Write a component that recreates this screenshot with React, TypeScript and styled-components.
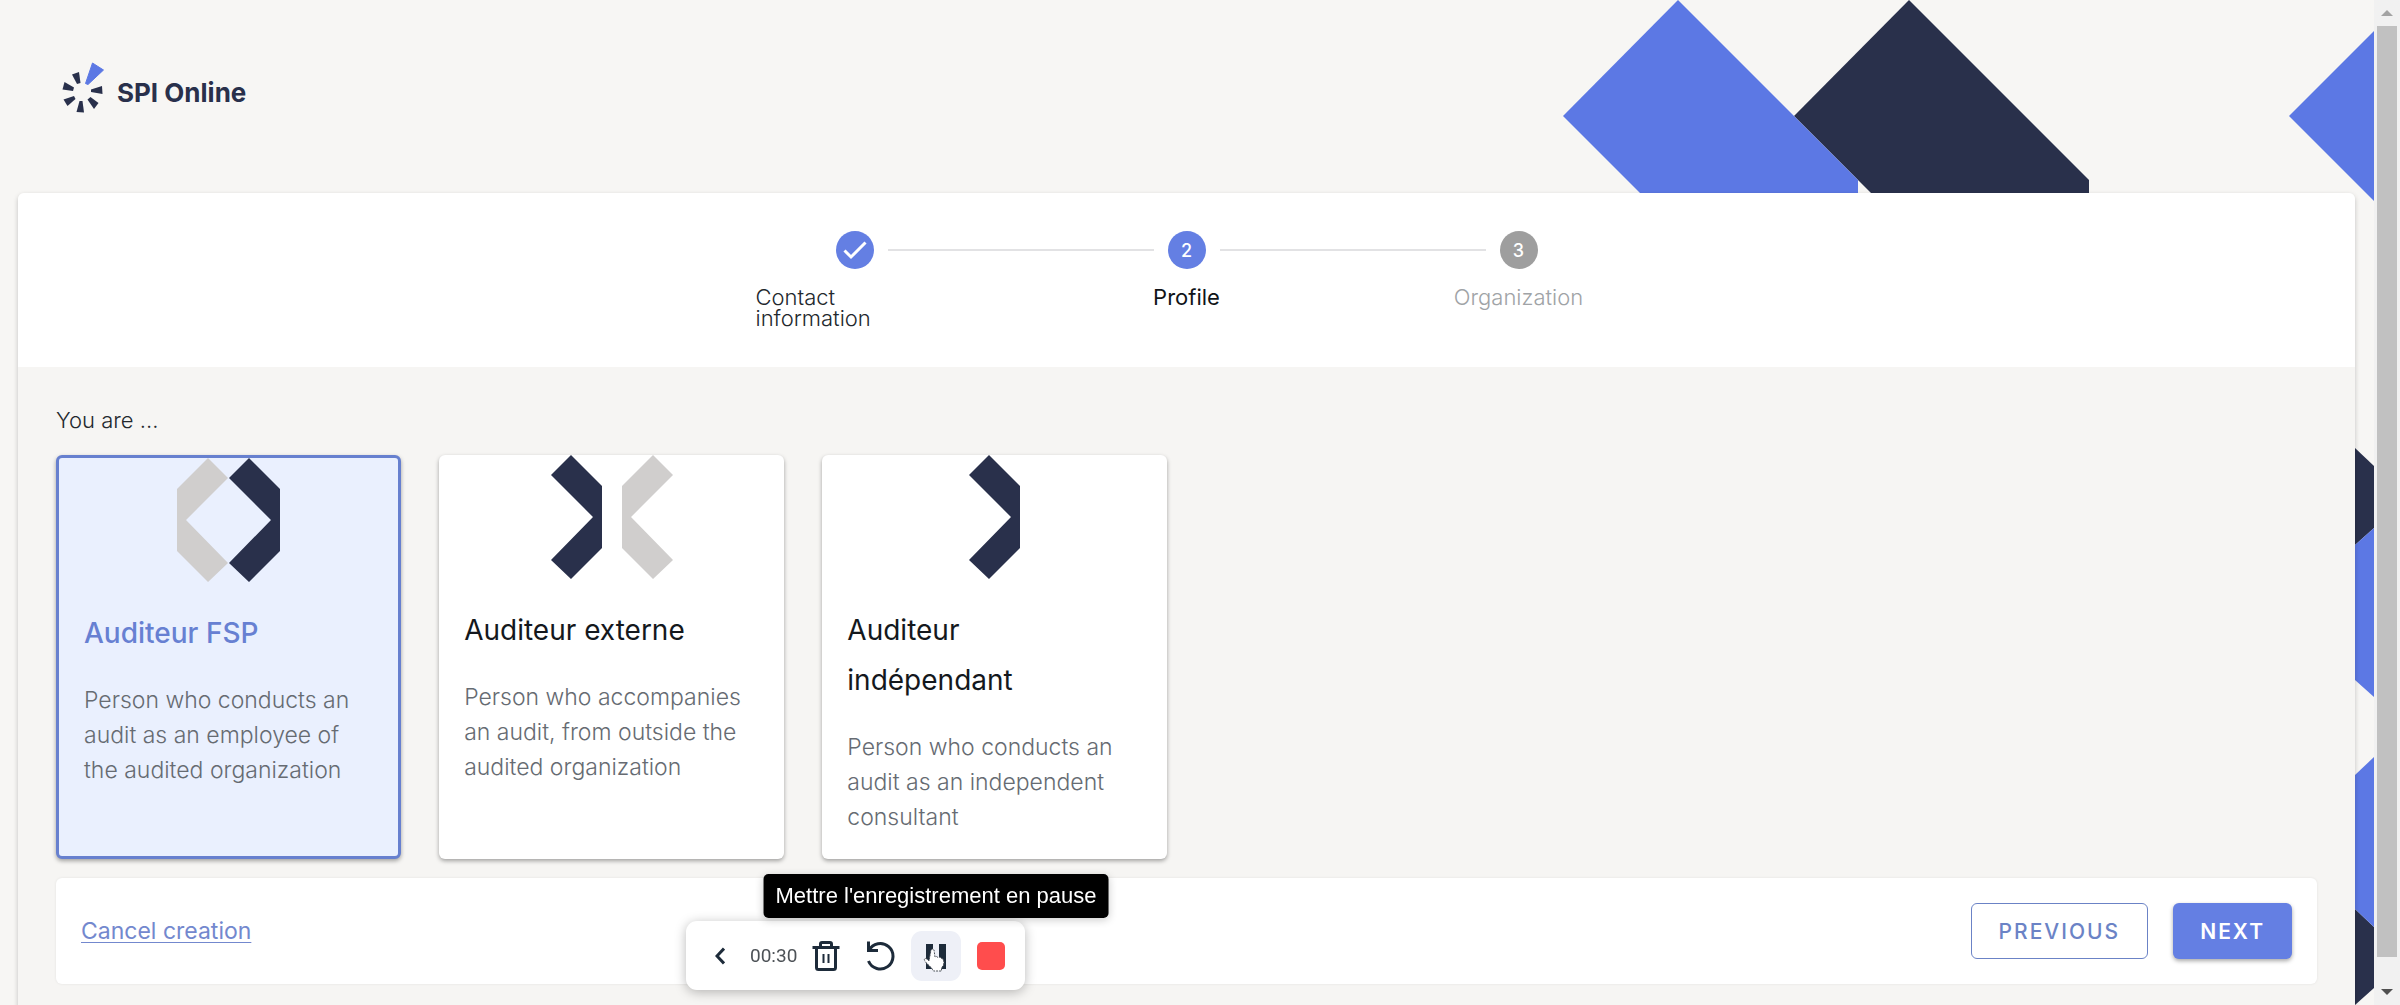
import React from "react";
import styled, { createGlobalStyle, css } from "styled-components";

const colors = {
  page: "#f7f6f4",
  blue: "#5c78e4",
  primary: "#647fe3",
  navy: "#29304b",
  grey: "#d0cecd",
  text: "#23282d",
  muted: "#666b72",
};

const GlobalStyle = createGlobalStyle`
  *, *::before, *::after { box-sizing: border-box; }
  body {
    margin: 0;
    background: ${colors.page};
    color: ${colors.text};
    font-family: Inter, "Noto Sans", sans-serif;
    font-size: 22px;
  }
  button { font: inherit; color: inherit; cursor: pointer; }
  h1, h2, p, ol { margin: 0; padding: 0; font-weight: 400; }
`;

const Window = styled.div`
  display: grid;
  grid-template-columns: minmax(0, 1fr) 26px;
  height: 100vh;
  overflow: hidden;
`;

const Page = styled.div`
  position: relative;
  display: flex;
  flex-direction: column;
  height: 100vh;
  padding: 0 19px 0 18px;
  overflow: hidden;
`;

const Backdrop = styled.svg`
  position: absolute;
  top: 0;
  right: 0;
  width: 811px;
  height: 1005px;
`;

const Header = styled.header`
  position: relative;
  display: flex;
  padding: 62px 44px 80px;
`;

const Brand = styled.a`
  display: flex;
  align-items: flex-end;
  gap: 13px;
  height: 51px;
  color: ${colors.navy};
  font-size: 26px;
  font-weight: 700;
  line-height: 40px;
  text-decoration: none;
`;

const Panel = styled.main`
  position: relative;
  flex: 1 0 auto;
  background: #f6f5f3;
  border-radius: 6px 6px 0 0;
  box-shadow: 0 2px 5px rgba(0, 0, 0, 0.22);
`;

const StepperBar = styled.nav`
  background: #fff;
  border-radius: 6px 6px 0 0;
  padding: 38px;
`;

const Steps = styled.ol`
  display: grid;
  grid-template-columns: repeat(3, 1fr);
  max-width: 996px;
  margin: 0 auto;
  list-style: none;
`;

const Step = styled.li`
  position: relative;
  display: flex;
  flex-direction: column;
  align-items: center;
  gap: 18px;

  & + &::before {
    content: "";
    position: absolute;
    top: 18px;
    left: calc(-50% + 33px);
    right: calc(50% + 33px);
    height: 2px;
    background: #e2e2e4;
  }
`;

const StepBadge = styled.span<{ $on: boolean }>`
  display: grid;
  place-items: center;
  width: 38px;
  height: 38px;
  border-radius: 50%;
  background: ${(p) => (p.$on ? colors.primary : "#9e9e9e")};
  color: #fff;
  font-size: 18px;
  font-weight: 500;
`;

type StepState = "done" | "current" | "todo";

const StepLabel = styled.span<{ $state: StepState }>`
  max-width: 198px;
  min-height: 42px;
  font-size: 22px;
  line-height: 21px;
  white-space: pre-line;
  ${(p) =>
    p.$state === "done" &&
    css`
      width: 100%;
      color: #23282d;
      font-weight: 300;
    `}
  ${(p) =>
    p.$state === "current" &&
    css`
      color: #101418;
    `}
  ${(p) =>
    p.$state === "todo" &&
    css`
      color: #a0a3a6;
      font-weight: 300;
    `}
`;

const Body = styled.section`
  padding: 38px;
`;

const Question = styled.h1`
  && {
    margin-bottom: 20px;
    font-size: 22px;
    font-weight: 300;
    line-height: 30px;
  }
`;

const Cards = styled.div`
  display: grid;
  grid-template-columns: repeat(6, minmax(0, 1fr));
  gap: 38px;
`;

const Card = styled.button<{ $selected: boolean }>`
  display: flex;
  flex-direction: column;
  justify-content: flex-start;
  min-height: 404px;
  padding: 0;
  border: ${(p) => (p.$selected ? "3px solid #6780cf" : "0")};
  border-radius: 6px;
  background: ${(p) => (p.$selected ? "#eaf0fe" : "#fff")};
  box-shadow: 0 2px 4px rgba(0, 0, 0, 0.35);
  text-align: left;
`;

const CardArt = styled.svg`
  display: block;
  align-self: center;
  height: 124px;
`;

const CardContent = styled.span`
  display: flex;
  flex-direction: column;
  gap: 25px;
  padding: 26px 25px 24px;
`;

const CardTitle = styled.span<{ $selected: boolean }>`
  max-width: 260px;
  font-size: 28px;
  line-height: 50px;
  font-weight: ${(p) => (p.$selected ? 500 : 400)};
  color: ${(p) => (p.$selected ? "#6780d2" : "#14181d")};
`;

const CardText = styled.span`
  color: ${colors.muted};
  font-size: 23px;
  font-weight: 300;
  line-height: 35px;
`;

const ActionBar = styled.footer`
  display: flex;
  align-items: center;
  justify-content: space-between;
  margin-top: 19px;
  padding: 25px;
  border-radius: 6px;
  background: #fff;
  box-shadow: 0 0 3px rgba(0, 0, 0, 0.08);
`;

const CancelLink = styled.a`
  color: #7388ce;
  font-size: 23px;
  line-height: 30px;
  text-decoration: underline;
  text-decoration-thickness: 1px;
  text-underline-offset: 3px;
`;

const Actions = styled.div`
  display: flex;
  gap: 25px;
`;

const ActionButton = styled.button<{ $filled?: boolean }>`
  height: 56px;
  padding: 0 27px;
  border-radius: 6px;
  font-size: 21px;
  font-weight: ${(p) => (p.$filled ? 600 : 500)};
  letter-spacing: 2px;
  text-transform: uppercase;
  ${(p) =>
    p.$filled
      ? css`
          border: 0;
          background: ${colors.primary};
          color: #fff;
          box-shadow: 0 2px 4px rgba(0, 0, 0, 0.35);
        `
      : css`
          border: 1px solid #6b83c6;
          background: #fff;
          color: #6b83c6;
        `}
`;

const Recorder = styled.div`
  position: fixed;
  left: 686px;
  bottom: 15px;
  display: flex;
  align-items: center;
  gap: 5px;
  height: 69px;
  padding: 0 9px;
  border-radius: 11px;
  background: #fff;
  box-shadow: 0 2px 12px rgba(0, 0, 0, 0.28);
`;

const RecorderStart = styled.div`
  display: flex;
  align-items: center;
`;

const Timer = styled.time`
  width: 51px;
  padding-left: 5px;
  color: #4d5257;
  font-family: Roboto, sans-serif;
  font-size: 19px;
`;

const ToolButton = styled.button<{ $hover?: boolean }>`
  position: relative;
  display: grid;
  place-items: center;
  width: 50px;
  height: 50px;
  padding: 0;
  border: 0;
  border-radius: 11px;
  background: ${(p) => (p.$hover ? "#eef0f7" : "transparent")};
`;

const Tooltip = styled.span`
  position: absolute;
  bottom: calc(100% + 13px);
  left: 50%;
  transform: translateX(-50%);
  padding: 0 12px;
  border-radius: 5px;
  background: #000;
  color: #fff;
  font-family: "Liberation Sans", Arial, sans-serif;
  font-size: 22px;
  line-height: 44px;
  white-space: nowrap;
  box-shadow: 0 2px 8px rgba(0, 0, 0, 0.2);
`;

const ScrollTrack = styled.aside`
  display: flex;
  flex-direction: column;
  padding: 0 3px;
  background: #f1f1f1;
`;

const ScrollArrow = styled.button`
  display: grid;
  place-items: center;
  height: 26px;
  padding: 0;
  border: 0;
  background: transparent;
`;

const ScrollThumb = styled.div`
  flex: 931;
  background: #c1c1c1;
`;

const ScrollRest = styled.div`
  flex: 22;
`;

const Bracket = ({ x, flip, fill }: { x: number; flip?: boolean; fill: string }) => (
  <polygon
    fill={fill}
    transform={flip ? `translate(${x + 51} 0) scale(-1 1)` : `translate(${x} 0)`}
    points="20,0 51,31 51,93 20,124 0,105 42,62 0,20"
  />
);

const profiles = [
  {
    title: "Auditeur FSP",
    text: "Person who conducts an audit as an employee of the audited organization",
    selected: true,
    art: (
      <CardArt width="103" viewBox="0 0 103 124" aria-hidden="true">
        <Bracket x={0} flip fill={colors.grey} />
        <Bracket x={52} fill={colors.navy} />
      </CardArt>
    ),
  },
  {
    title: "Auditeur externe",
    text: "Person who accompanies an audit, from outside the audited organization",
    selected: false,
    art: (
      <CardArt width="122" viewBox="0 0 122 124" aria-hidden="true">
        <Bracket x={0} fill={colors.navy} />
        <Bracket x={71} flip fill={colors.grey} />
      </CardArt>
    ),
  },
  {
    title: "Auditeur indépendant",
    text: "Person who conducts an audit as an independent consultant",
    selected: false,
    art: (
      <CardArt width="51" viewBox="0 0 51 124" aria-hidden="true">
        <Bracket x={0} fill={colors.navy} />
      </CardArt>
    ),
  },
];

const steps: { label: string; state: StepState }[] = [
  { label: "Contact\ninformation", state: "done" },
  { label: "Profile", state: "current" },
  { label: "Organization", state: "todo" },
];

const Logo = () => (
  <svg width="42" height="51" viewBox="62 62 42 51" aria-hidden="true">
    <g strokeLinejoin="round" strokeWidth="1">
      <polygon fill={colors.blue} stroke={colors.blue} points="92.5,63 103.5,70 88,84.5 85.5,83.5" />
      <g fill={colors.navy}>
        <polygon points="72,74.5 79,72 80.5,83 77,84" />
        <polygon points="64.5,82 74,87.5 73,91 62.5,89.5" />
        <polygon points="63.5,99.5 74,96 75.5,99 67.5,106" />
        <polygon points="79.5,101 82.5,101 84,112.5 76.5,112" />
        <polygon points="87.5,99.5 90.5,97 98.5,103 94,109" />
        <polygon points="91,89.5 102,86 102.5,94 91,92" />
      </g>
    </g>
  </svg>
);

export default function App() {
  return (
    <>
      <GlobalStyle />
      <Window>
        <Page>
          <Backdrop viewBox="1563 0 811 1005" aria-hidden="true">
            <g fill={colors.navy}>
              <polygon points="1909,0 2089,180 2089,260 1938,260 1794,116" />
              <polygon points="2355,448 2374,466 2374,528 2355,545" />
              <polygon points="2355,909 2374,927 2374,988 2355,1005" />
            </g>
            <g fill={colors.blue}>
              <polygon points="1678,0 1858,180 1858,260 1707,260 1563,116" />
              <polygon points="2374,31 2289,116 2374,201" />
              <polygon points="2355,545 2374,528 2374,697 2355,680" />
              <polygon points="2355,775 2374,757 2374,927 2355,909" />
            </g>
          </Backdrop>
          <Header>
            <Brand href="#">
              <Logo />
              SPI Online
            </Brand>
          </Header>
          <Panel>
            <StepperBar aria-label="Progress">
              <Steps>
                {steps.map((s, i) => (
                  <Step key={s.label} aria-current={s.state === "current" ? "step" : undefined}>
                    <StepBadge $on={s.state !== "todo"}>
                      {s.state === "done" ? (
                        <svg width="24" height="20" viewBox="0 0 24 20" fill="none" stroke="#fff" strokeWidth="3">
                          <path d="M1.5 10.5 8 17 22.5 2.5" />
                        </svg>
                      ) : (
                        i + 1
                      )}
                    </StepBadge>
                    <StepLabel $state={s.state}>{s.label}</StepLabel>
                  </Step>
                ))}
              </Steps>
            </StepperBar>
            <Body>
              <Question>You are ...</Question>
              <Cards>
                {profiles.map((p) => (
                  <Card key={p.title} type="button" $selected={p.selected} aria-pressed={p.selected}>
                    {p.art}
                    <CardContent>
                      <CardTitle $selected={p.selected}>{p.title}</CardTitle>
                      <CardText>{p.text}</CardText>
                    </CardContent>
                  </Card>
                ))}
              </Cards>
              <ActionBar>
                <CancelLink href="#">Cancel creation</CancelLink>
                <Actions>
                  <ActionButton type="button">Previous</ActionButton>
                  <ActionButton type="button" $filled>
                    Next
                  </ActionButton>
                </Actions>
              </ActionBar>
            </Body>
          </Panel>
        </Page>
        <ScrollTrack>
          <ScrollArrow type="button" aria-label="Scroll up">
            <svg width="12" height="6" viewBox="0 0 12 6">
              <path d="M0 6 6 0l6 6z" fill="#a3a3a3" />
            </svg>
          </ScrollArrow>
          <ScrollThumb />
          <ScrollRest />
          <ScrollArrow type="button" aria-label="Scroll down">
            <svg width="12" height="6" viewBox="0 0 12 6">
              <path d="M0 0h12L6 6z" fill="#505050" />
            </svg>
          </ScrollArrow>
        </ScrollTrack>
      </Window>
      <Recorder role="toolbar" aria-label="Enregistrement">
        <RecorderStart>
          <ToolButton type="button" aria-label="Réduire">
            <svg width="10" height="18" viewBox="0 0 10 18" fill="none" stroke="#1d2b3a" strokeWidth="3">
              <path d="M9 1.5 2 9l7 7.5" />
            </svg>
          </ToolButton>
          <Timer>00:30</Timer>
        </RecorderStart>
        <ToolButton type="button" aria-label="Supprimer">
          <svg width="28" height="30" viewBox="0 0 28 30" fill="none" stroke="#1d2b3a" strokeWidth="3">
            <path d="M0.500 6.500h27M8.500 6V3q0-1.500 1.500-1.500h8q1.500 0 1.500 1.500v3M4.500 7v19.500q0 2 2 2h15q2 0 2-2V7" />
            <path d="M11.500 13v9M16.500 13v9" strokeWidth="2" />
          </svg>
        </ToolButton>
        <ToolButton type="button" aria-label="Recommencer">
          <svg width="30" height="30" viewBox="0 0 30 30" fill="none" stroke="#1d2b3a" strokeWidth="3">
            <path d="M2.500 0.500v9h9.500" />
            <path d="M3 9.500A12.700 12.700 0 1 1 2.500 20" />
          </svg>
        </ToolButton>
        <ToolButton type="button" $hover aria-label="Mettre en pause">
          <svg width="34" height="34" viewBox="0 0 34 34">
            <path d="M7 5h7v25H7zM20 5h7v25h-7z" fill="#1d2b3a" />
            <path
              d="M12 11q1.500-2 3 0l1 7 1.500-.5 1.500 1 2-.5 1.500 1.500 1.500.5q1.500 3 .5 6l-2 3v3h-8l-2-3-6-6q-2-3-.5-3.500t4 2.500z"
              fill="#fff"
              stroke="#4b5058"
              strokeWidth="1"
              strokeDasharray="2 1"
            />
          </svg>
          <Tooltip role="tooltip">Mettre l'enregistrement en pause</Tooltip>
        </ToolButton>
        <ToolButton type="button" aria-label="Arrêter">
          <svg width="28" height="28" viewBox="0 0 28 28">
            <rect width="28" height="28" rx="5" fill="#ff4d4d" />
          </svg>
        </ToolButton>
      </Recorder>
    </>
  );
}
